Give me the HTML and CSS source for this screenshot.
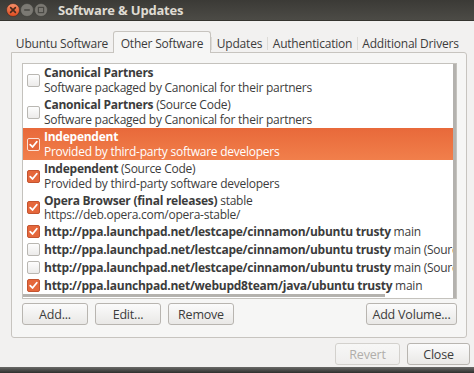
FILE: index.html
```html
<html>

<head>
	<title>Software &amp; Updates</title>
	<link rel="stylesheet" href="styles.css">
</head>

<body>
	<div class="window">
		<div class="titlebar">
			<div class="titlebar__controls">
				<svg class="control" width="14" height="14" viewBox="0 0 14 14">
					<defs>
						<linearGradient id="close-grad" x1="0" y1="0" x2="0" y2="1">
							<stop offset="0" stop-color="#f7906a" />
							<stop offset="1" stop-color="#df4b1f" />
						</linearGradient>
					</defs>
					<circle cx="7" cy="7" r="6.5" fill="url(#close-grad)" stroke="#3a2a22" stroke-width="0.6" />
					<path d="M4.6 4.6 L9.4 9.4 M9.4 4.6 L4.6 9.4" stroke="#4a2a1c" stroke-width="1.6" stroke-linecap="round" />
				</svg>
				<svg class="control" width="14" height="14" viewBox="0 0 14 14">
					<circle cx="7" cy="7" r="6.5" fill="#7b7973" stroke="#3d3c38" stroke-width="0.6" />
					<path d="M4.2 7 L9.8 7" stroke="#4b4a45" stroke-width="1.6" />
				</svg>
				<svg class="control" width="14" height="14" viewBox="0 0 14 14">
					<circle cx="7" cy="7" r="6.5" fill="#7b7973" stroke="#3d3c38" stroke-width="0.6" />
					<rect x="4.4" y="4.4" width="5.2" height="5.2" fill="none" stroke="#4b4a45" stroke-width="1.2" />
				</svg>
			</div>
			<span class="titlebar__title">Software &amp; Updates</span>
		</div>

		<div class="content">
			<div class="tabs">
				<div class="tab tab--w1">Ubuntu Software</div>
				<div class="tab tab--active tab--w2">Other Software</div>
				<div class="tab tab--sep tab--w3">Updates</div>
				<div class="tab tab--sep tab--w4">Authentication</div>
				<div class="tab tab--sep tab--w5">Additional Drivers</div>
			</div>

			<div class="notebook">
				<div class="sources">
					<div class="sources__list">
						<div class="source source--double">
							<span class="check"></span>
							<div class="source__text">
								<div class="source__line"><b>Canonical Partners</b></div>
								<div class="source__line">Software packaged by Canonical for their partners</div>
							</div>
						</div>
						<div class="source source--double">
							<span class="check"></span>
							<div class="source__text">
								<div class="source__line"><b>Canonical Partners</b> (Source Code)</div>
								<div class="source__line">Software packaged by Canonical for their partners</div>
							</div>
						</div>
						<div class="source source--double source--selected">
							<span class="check check--on check--light"></span>
							<div class="source__text">
								<div class="source__line"><b>Independent</b></div>
								<div class="source__line">Provided by third-party software developers</div>
							</div>
						</div>
						<div class="source source--double">
							<span class="check check--on"></span>
							<div class="source__text">
								<div class="source__line"><b>Independent</b> (Source Code)</div>
								<div class="source__line">Provided by third-party software developers</div>
							</div>
						</div>
						<div class="source source--double source--tight">
							<span class="check check--on"></span>
							<div class="source__text">
								<div class="source__line"><b>Opera Browser (final releases)</b> stable</div>
								<div class="source__line source__line--url">https://deb.opera.com/opera-stable/</div>
							</div>
						</div>
						<div class="source">
							<span class="check check--on"></span>
							<div class="source__line"><b>http://ppa.launchpad.net/lestcape/cinnamon/ubuntu trusty</b> main</div>
						</div>
						<div class="source">
							<span class="check"></span>
							<div class="source__line"><b>http://ppa.launchpad.net/lestcape/cinnamon/ubuntu trusty</b> main (Source Code)</div>
						</div>
						<div class="source">
							<span class="check"></span>
							<div class="source__line"><b>http://ppa.launchpad.net/lestcape/cinnamon/ubuntu trusty</b> main (Source Code)</div>
						</div>
						<div class="source">
							<span class="check check--on"></span>
							<div class="source__line"><b>http://ppa.launchpad.net/webupd8team/java/ubuntu trusty</b> main</div>
						</div>
					</div>
					<div class="sources__vscroll"></div>
					<div class="sources__hscroll"></div>
				</div>

				<div class="actions">
					<button class="button button--small">Add...</button>
					<button class="button button--small">Edit...</button>
					<button class="button button--small">Remove</button>
					<button class="button button--volume">Add Volume...</button>
				</div>
			</div>

			<div class="dialog-buttons">
				<button class="button button--revert" disabled>Revert</button>
				<button class="button button--close">Close</button>
			</div>
		</div>
	</div>
	<div class="desktop"></div>
</body>

</html>
```

FILE: styles.css
```css
* {
	margin: 0;
	padding: 0;
	box-sizing: border-box;
}

button {
	outline: none;
}

body {
	width: 474px;
	height: 373px;
	overflow: hidden;
	background-color: #2d2d2b;
	font-family: "Open Sans", "DejaVu Sans", sans-serif;
	font-size: 12px;
	color: #3c3c3c;
}

.window {
	height: 367px;
	background-color: #f2f1f0;
	display: flex;
	flex-direction: column;
}

.titlebar {
	height: 21px;
	display: flex;
	align-items: center;
	padding-left: 6px;
	background: linear-gradient(#3b3a36, #4c4b46);
	border-bottom: 1px solid #35342f;
}

.titlebar__controls {
	display: flex;
	width: 52px;
}

.control {
	display: block;
}

.titlebar__title {
	font-weight: bold;
	font-size: 13px;
	color: #dfdbd2;
	letter-spacing: -0.2px;
}

.content {
	flex: 1;
	display: flex;
	flex-direction: column;
	padding: 10px 7px 0 11px;
}

.tabs {
	display: flex;
	height: 21px;
	align-items: stretch;
	position: relative;
	z-index: 1;
}

.tab {
	display: flex;
	align-items: center;
	justify-content: center;
	font-size: 12px;
	letter-spacing: -0.2px;
	color: #3c3c3c;
	white-space: nowrap;
	padding-top: 3px;
}

.tab--sep {
	border-left: 1px solid #dcdad6;
	margin: 6px 0 2px;
	padding-top: 0;
	padding-bottom: 1px;
}

.tab--active {
	background-color: #f6f6f5;
	border: 1px solid #c7c4bf;
	border-bottom: none;
	border-radius: 3px 3px 0 0;
	padding-top: 1px;
	margin-bottom: -1px;
}

.tab--w1 { width: 102px; }
.tab--w2 { width: 98px; }
.tab--w3 { width: 56px; }
.tab--w4 { width: 90px; }
.tab--w5 { width: 106px; }

.notebook {
	width: 456px;
	height: 286px;
	border: 1px solid #c7c4bf;
	border-radius: 0 3px 3px 3px;
	background-color: #f6f6f5;
	padding: 10px 9px 0 10px;
}

.sources {
	position: relative;
	height: 236px;
	background-color: #fff;
	border: 1px solid #c4c2bd;
	overflow: hidden;
}

.sources__list {
	width: 430px;
	overflow: hidden;
}

.sources__vscroll {
	position: absolute;
	top: 0;
	right: 0;
	width: 3px;
	height: 100%;
	background-color: #b4b2ae;
}

.sources__hscroll {
	position: absolute;
	left: 0;
	bottom: 1px;
	width: 362px;
	height: 3px;
	background-color: #b4b2ae;
}

.source {
	display: flex;
	align-items: center;
	height: 18px;
	padding-left: 4px;
	white-space: nowrap;
	letter-spacing: -0.25px;
}

.source--double {
	height: 32px;
}

.source--tight {
	height: 30px;
}

.source--tight .source__line--url {
	line-height: 13px;
}

.source--selected {
	background: linear-gradient(#e8693a, #f17f4b);
	color: #fff;
}

.source__line {
	line-height: 15px;
}

.source__text {
	display: flex;
	flex-direction: column;
}

.check {
	flex: none;
	width: 13px;
	height: 13px;
	margin-right: 4px;
	border: 1px solid #b9b7b2;
	border-radius: 2px;
	background: linear-gradient(#fdfdfd, #ecebea);
}

.check--on {
	border-color: #c35430;
	background: #e5673b url("data:image/svg+xml,%3Csvg xmlns='http://www.w3.org/2000/svg' width='11' height='11' viewBox='0 0 11 11'%3E%3Cpath d='M2.2 5.6 L4.5 8 L8.8 2.8' fill='none' stroke='%23fff' stroke-width='1.8' stroke-linecap='round' stroke-linejoin='round'/%3E%3C/svg%3E") center / 11px 11px no-repeat;
}

.check--light {
	border-color: #fbe0d4;
}

.actions {
	display: flex;
	margin-top: 4px;
	gap: 7px;
}

.button {
	height: 22px;
	font-family: inherit;
	font-size: 12.5px;
	letter-spacing: -0.2px;
	color: #3c3c3c;
	background: linear-gradient(#fbfbfb, #e9e8e6);
	border: 1px solid #b8b5b0;
	border-radius: 3px;
}

.button--small {
	width: 66px;
}

.button--volume {
	width: 91px;
	margin-left: auto;
}

.dialog-buttons {
	display: flex;
	justify-content: flex-end;
	gap: 7px;
	margin-top: 5px;
	margin-right: -3px;
}

.button--revert {
	width: 65px;
	color: #b0aeaa;
	border-color: #d3d1cd;
	background: linear-gradient(#f7f7f6, #efeeed);
}

.button--close {
	width: 63px;
}

.desktop {
	height: 6px;
	background: linear-gradient(#6a6a68, #2f2f2d);
}
```
